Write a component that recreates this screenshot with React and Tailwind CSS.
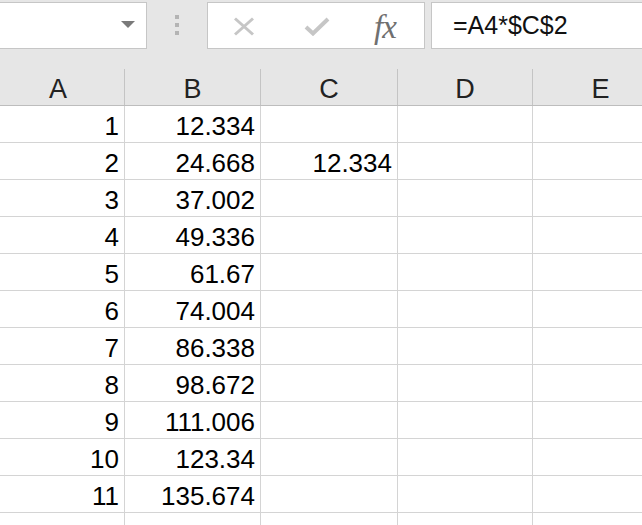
import React from "react";

// Column widths taken from the sheet grid (incl. right border)
const Columns = [
    { name: "A", width: "w-[125px]", label: "pr-[8px]" },
    { name: "B", width: "w-[136px]", label: "" },
    { name: "C", width: "w-[137px]", label: "" },
    { name: "D", width: "w-[135px]", label: "" },
    { name: "E", width: "w-[136px]", label: "" },
];

const Rows = [
    ["1", "12.334", ""],
    ["2", "24.668", "12.334"],
    ["3", "37.002", ""],
    ["4", "49.336", ""],
    ["5", "61.67", ""],
    ["6", "74.004", ""],
    ["7", "86.338", ""],
    ["8", "98.672", ""],
    ["9", "111.006", ""],
    ["10", "123.34", ""],
    ["11", "135.674", ""],
    ["", "", ""],
];

const App = () => {
    return (
        <div className="w-[642px] h-[525px] overflow-hidden bg-white font-['Liberation_Sans',Arial,sans-serif] text-black">
            {/* Formula bar */}
            <div className="h-[69px] bg-[#e6e6e6] flex flex-row items-start pt-[2px]">
                {/* Name box */}
                <div className="ml-[-2px] w-[149px] h-[47px] shrink-0 bg-white border border-[#c6c6c6] flex flex-row items-start justify-end pt-[18px] pr-[11px]">
                    <svg width="14" height="7" viewBox="0 0 14 7">
                        <path d="M0 0 H14 L7 7 Z" fill="#7a7a7a" />
                    </svg>
                </div>
                {/* Grip */}
                <div className="w-[60px] shrink-0 flex flex-col items-center gap-[4px] pt-[13px]">
                    <div className="w-[4px] h-[4px] bg-[#b4b4b4]"></div>
                    <div className="w-[4px] h-[4px] bg-[#b4b4b4]"></div>
                    <div className="w-[4px] h-[4px] bg-[#b4b4b4]"></div>
                </div>
                {/* Cancel / enter / function */}
                <div className="w-[218px] h-[47px] shrink-0 bg-white border border-[#c6c6c6] flex flex-row items-start pt-[14px]">
                    <svg className="ml-[25px]" width="22" height="19" viewBox="0 0 22 19">
                        <path d="M2 1.5 L20 17.5 M20 1.5 L2 17.5" stroke="#c6c6c6" strokeWidth="3" />
                    </svg>
                    <svg className="ml-[49px]" width="26" height="19" viewBox="0 0 26 19">
                        <path d="M2 10 L9 16.5 L24 2" stroke="#c6c6c6" strokeWidth="4" fill="none" />
                    </svg>
                    <div className="ml-[44px] mt-[-6px] font-['Liberation_Serif',serif] italic text-[33px] leading-none text-[#707070] tracking-[-1px]">
                        fx
                    </div>
                </div>
                {/* Formula input */}
                <div className="ml-[6px] flex-1 h-[47px] bg-white border border-r-0 border-[#c6c6c6] pl-[21px] pt-[6px] text-[25px] leading-[32px] text-[#111]">
                    =A4*$C$2
                </div>
            </div>

            {/* Column headers */}
            <div className="h-[37px] w-max bg-[#e6e6e6] flex flex-row border-b border-[#bdbdbd]">
                {Columns.map((col, index) => {
                    return (
                        <div
                            key={index}
                            className={`${col.width} ${col.label} h-full flex items-center justify-center pt-[4px] text-[27px] text-[#222] border-r border-[#c4c4c4]`}
                        >
                            {col.name}
                        </div>
                    );
                })}
            </div>

            {/* Cells */}
            {Rows.map((row, rIndex) => {
                return (
                    <div key={rIndex} className="h-[37px] w-max flex flex-row border-b border-[#d4d4d4] text-[26px]">
                        {Columns.map((col, cIndex) => {
                            return (
                                <div
                                    key={cIndex}
                                    className={`${col.width} h-full flex items-center justify-end pr-[5px] pt-[4px] border-r border-[#d4d4d4]`}
                                >
                                    {row[cIndex] || ""}
                                </div>
                            );
                        })}
                    </div>
                );
            })}
        </div>
    );
};

export default App;
